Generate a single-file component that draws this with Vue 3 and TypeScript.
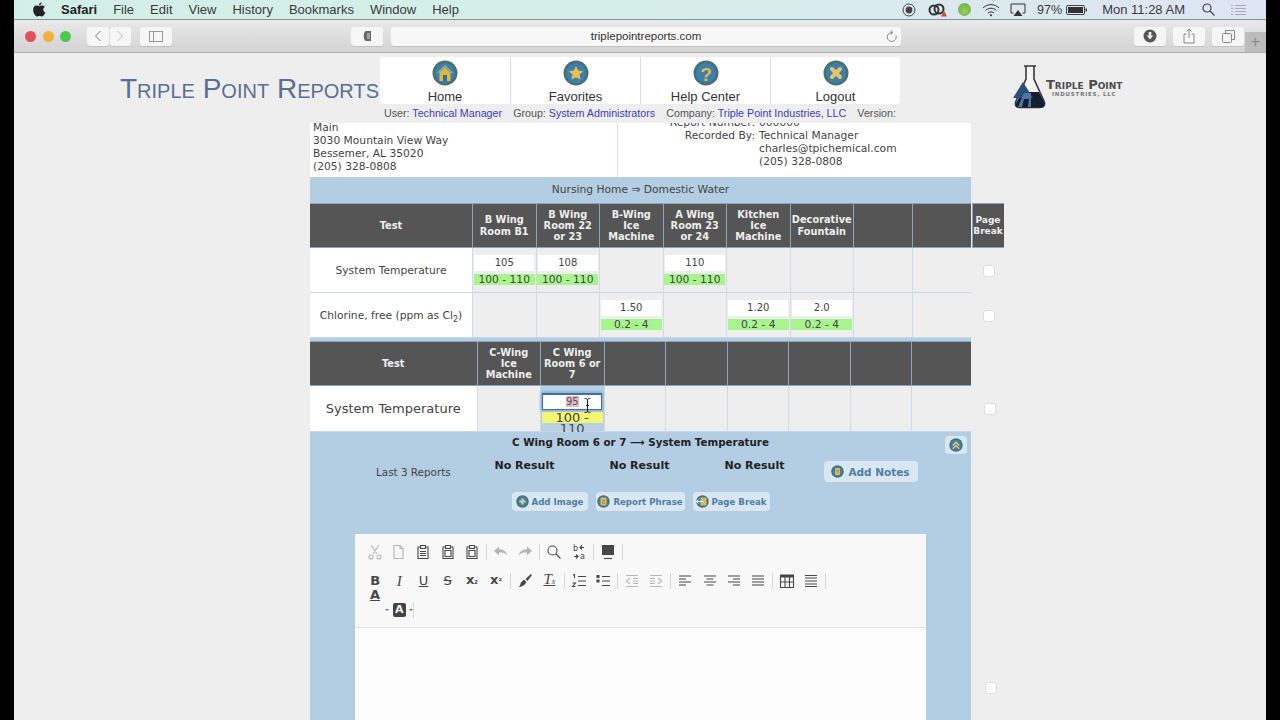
<template>
  <div class="screen">
    <svg class="sprite" width="0" height="0">
      <symbol id="orb" viewBox="0 0 26 26">
        <circle cx="13" cy="13" r="12.5" fill="#47706f" />
        <circle cx="13" cy="13" r="10" fill="#3c80b0" />
      </symbol>
    </svg>

    <div class="window">
      <!-- mac menu bar -->
      <div class="menubar">
        <svg class="apple" width="14" height="16" viewBox="0 0 14 16"><path fill="#222" d="M9.6 0.6c0.1 1.100-0.900 2.800-2.700 2.900-0.200-1.400 1.100-2.800 2.700-2.900zM7 4.300c0.800 0 1.700-0.700 3-0.700 1 0 2.100 0.500 2.800 1.500-2.200 1.300-1.900 4.400 0.500 5.400-0.600 1.600-1.900 4-3.300 4-0.900 0-1.300-0.600-2.500-0.600s-1.700 0.600-2.500 0.600c-1.700 0-3.900-3.700-3.900-6.700 0-2.700 1.700-4.200 3.400-4.200 1.100 0 1.900 0.700 2.500 0.700z" /></svg>
        <span class="menu-item strong">Safari</span>
        <span v-for="m in menus" :key="m" class="menu-item">{{ m }}</span>
        <div class="status">
          <svg class="s-rec" width="14" height="14" viewBox="0 0 14 14"><circle cx="7" cy="7" r="6" fill="none" stroke="#444" /><circle cx="7" cy="7" r="3.400" fill="#444" /></svg>
          <svg class="s-cc" width="20" height="14" viewBox="0 0 20 14"><circle cx="6" cy="7" r="4.500" fill="none" stroke="#333" stroke-width="2" /><circle cx="11" cy="6" r="4.500" fill="none" stroke="#333" stroke-width="2" /><path d="M13 13.500l3-6 3 6z" fill="#c9512f" /></svg>
          <span class="s-dot"></span>
          <svg class="s-wifi" width="18" height="14" viewBox="0 0 18 14" fill="none" stroke="#333"><path d="M1 5c4.500-4.500 11.500-4.500 16 0M3.500 7.500c3-3 8-3 11 0M6 10c1.700-1.500 4.300-1.500 6 0" /><circle cx="9" cy="12.300" r="1" fill="#333" stroke="none" /></svg>
          <svg class="s-air" width="16" height="14" viewBox="0 0 16 14"><path d="M3.500 10H1V1h14v9h-2.500" fill="none" stroke="#333" /><path d="M8 7l4.500 6h-9z" fill="#333" /></svg>
          <span class="s-pct">97%</span>
          <svg class="s-bat" width="21" height="10" viewBox="0 0 21 10"><rect x="0.500" y="0.500" width="18" height="9" rx="1.500" fill="none" stroke="#444" /><rect x="2" y="2" width="15" height="6" fill="#333" /><rect x="19.500" y="3.500" width="1.500" height="3" fill="#444" /></svg>
          <span class="s-time">Mon 11:28 AM</span>
          <svg class="s-search" width="13" height="13" viewBox="0 0 13 13" fill="none" stroke="#444" stroke-width="1.200"><circle cx="5" cy="5" r="4" /><path d="M8 8l4.500 4.500" /></svg>
          <svg class="s-list" width="16" height="12" viewBox="0 0 16 12" stroke="#aab" stroke-width="1"><path d="M5 1.500h11M5 4.500h11M5 7.500h11M5 10.500h11M1 1.500h2M1 4.500h2M1 7.500h2M1 10.500h2" /></svg>
        </div>
      </div>

      <!-- safari toolbar -->
      <div class="toolbar">
        <div class="lights"><i class="red"></i><i class="yellow"></i><i class="green"></i></div>
        <div class="tb-pair">
          <span class="tb-btn nav"><svg width="8" height="12" viewBox="0 0 8 12" fill="none" stroke="#777"><path d="M6.500 1L1.500 6l5 5" /></svg></span>
          <span class="tb-btn nav"><svg width="8" height="12" viewBox="0 0 8 12" fill="none" stroke="#bbb"><path d="M1.500 1l5 5-5 5" /></svg></span>
        </div>
        <span class="tb-btn wide side"><svg width="14" height="11" viewBox="0 0 14 11" fill="none" stroke="#999"><rect x="0.500" y="0.500" width="13" height="10" /><path d="M4.500 0.500v10" /></svg></span>
        <span class="tb-btn wide reader"><svg width="10" height="12" viewBox="0 0 10 12"><path d="M4 1h5v10H4C1 11 1 1 4 1z" fill="#666" /><path d="M5 4h3M5 6h3M5 8h3" stroke="#ddd" /></svg></span>
        <div class="urlbar">
          <span>triplepointreports.com</span>
          <svg class="reload" width="12" height="13" viewBox="0 0 12 13" fill="none" stroke="#888"><path d="M7 2.500a4.500 4.500 0 1 0 4 3" /><path d="M5.500 0.500L8 2.500 5.500 4.500" /></svg>
        </div>
        <div class="tb-right">
          <span class="tb-btn wide"><svg width="14" height="14" viewBox="0 0 14 14"><circle cx="7" cy="7" r="6.500" fill="#555" /><path d="M5.700 3h2.600v3.500h2L7 10.500 3.700 6.500h2z" fill="#eee" /></svg></span>
          <span class="tb-btn wide"><svg width="12" height="16" viewBox="0 0 12 16" fill="none" stroke="#888"><path d="M3.500 6H1v9h10V6H8.500M6 10V1M3.500 3.500L6 1l2.500 2.500" /></svg></span>
          <span class="tb-btn wide"><svg width="13" height="13" viewBox="0 0 13 13" fill="none" stroke="#888"><rect x="0.500" y="3.500" width="9" height="9" rx="1" /><path d="M3.500 3.500v-3h9v9h-3" /></svg></span>
        </div>
        <span class="newtab">+</span>
      </div>

      <!-- page -->
      <div class="page">
        <header class="site-head">
          <div class="brand">Triple Point Reports</div>
          <div class="head-mid">
            <nav class="nav-box">
              <a class="nav-cell">
                <svg class="orb" viewBox="0 0 26 26"><use href="#orb" /><path d="M13 5L5 13h2.500v8h11v-8H21z" fill="#e3b544" /><path d="M13 5L5 13h2.500L13 8l5.500 5H21z" fill="#7fae8a" /><rect x="11" y="15" width="4" height="6" fill="#2f6f9f" /></svg>
                <span>Home</span>
              </a>
              <a class="nav-cell">
                <svg class="orb" viewBox="0 0 26 26"><use href="#orb" /><path d="M13 6l2.200 4.600 5 .6-3.700 3.400 1 5L13 17.200 8.500 19.600l1-5-3.700-3.400 5-.6z" fill="#ecc04a" /></svg>
                <span>Favorites</span>
              </a>
              <a class="nav-cell">
                <svg class="orb" viewBox="0 0 26 26"><use href="#orb" /><text x="13" y="20.500" text-anchor="middle" class="orb-q">?</text></svg>
                <span>Help Center</span>
              </a>
              <a class="nav-cell">
                <svg class="orb" viewBox="0 0 26 26"><use href="#orb" /><path d="M9 9l8 8M17 9l-8 8" stroke="#e8c468" stroke-width="4" stroke-linecap="round" /></svg>
                <span>Logout</span>
              </a>
            </nav>
            <div class="user-line">
              <span>User: <a>Technical Manager</a></span>
              <span>Group: <a>System Administrators</a></span>
              <span>Company: <a>Triple Point Industries, LLC</a></span>
              <span>Version:</span>
            </div>
          </div>
          <div class="corp-logo">
            <svg width="36" height="44" viewBox="0 0 36 44">
              <path d="M12 1h12M14 1v13L4 36c-1.500 4 0 6.500 4 6.500h20c4 0 5.500-2.500 4-6.500L22 14V1" fill="#f4f4f4" stroke="#3a3a3a" stroke-width="1.600" />
              <path d="M10 27h17l5 10c1 3.500-.5 5.500-4 5.500H8c-3.500 0-5-2-3.500-5.500z" fill="#14202f" />
              <path d="M11 17L1 33h20z" fill="#2c4d7a" />
              <path d="M12 28l-6 14h4l2-8h5l-1 8h3V28z" fill="#4b77ab" />
            </svg>
            <div class="corp-text">
              <div class="corp-name">Triple Point</div>
              <div class="corp-sub">INDUSTRIES, LLC</div>
            </div>
          </div>
        </header>

        <div class="scroll">
          <div class="report">
            <section class="info">
              <div class="info-left">
                <div>Main</div>
                <div>3030 Mountain View Way</div>
                <div>Bessemer, AL 35020</div>
                <div>(205) 328-0808</div>
              </div>
              <div class="info-right">
                <span class="lab">Report Number:</span><span>000000</span>
                <span class="lab">Recorded By:</span><span>Technical Manager</span>
                <span></span><span>charles@tpichemical.com</span>
                <span></span><span>(205) 328-0808</span>
              </div>
            </section>

            <div class="section-title">Nursing Home ⇒ Domestic Water</div>

            <div class="row head t1">
              <div v-for="(h, i) in headA" :key="i" class="th">{{ h }}</div>
              <div class="th pb">Page Break</div>
            </div>
            <div v-for="r in rowsA" :key="r.name" class="row t1 body">
              <div class="name">{{ r.name }}<sub v-if="r.sub">{{ r.sub }}</sub><template v-if="r.sub">)</template></div>
              <div v-for="(c, i) in r.cells" :key="i" class="td">
                <template v-if="c">
                  <div class="val">{{ c[0] }}</div>
                  <div class="range">{{ c[1] }}</div>
                </template>
              </div>
              <div class="chk-cell"><span class="chk"></span></div>
            </div>

            <div class="spacer"></div>

            <div class="row head t2">
              <div v-for="(h, i) in headB" :key="i" class="th">{{ h }}</div>
            </div>
            <div class="row t2 body tall">
              <div class="name">System Temperature</div>
              <div class="td"></div>
              <div class="td active">
                <div class="val focus"><mark>95</mark></div>
                <div class="range warn">100 - 110</div>
                <svg class="ibeam" width="7" height="15" viewBox="0 0 7 15" fill="none" stroke="#222"><path d="M0.500 0.500c1.500 0 3 0 3 1.500v11c0 1.500-1.500 1.500-3 1.500M6.500 0.500c-1.500 0-3 0-3 1.500M6.500 14.500c-1.500 0-3 0-3-1.500M2 7.500h3" /></svg>
              </div>
              <div v-for="n in 6" :key="n" class="td"></div>
              <div class="chk-cell"><span class="chk"></span></div>
            </div>

            <div class="panel-wrap">
              <section class="panel">
                <button class="corner">
                  <svg class="mini" viewBox="0 0 26 26"><use href="#orb" /><path d="M7 14l6-6 6 6M7 20l6-6 6 6" fill="none" stroke="#e3c46a" stroke-width="3" /></svg>
                </button>
                <h3 class="panel-title">C Wing Room 6 or 7 ⟶ System Temperature</h3>
                <div class="last">
                  <span class="last-label">Last 3 Reports</span>
                  <b>No Result</b>
                  <b>No Result</b>
                  <b>No Result</b>
                  <button class="pill big">
                    <svg class="mini" viewBox="0 0 26 26"><use href="#orb" /><rect x="8" y="6" width="10" height="14" rx="2" fill="#dcb859" /><path d="M10 11h6M10 14h6" stroke="#8a7431" /></svg>
                    Add Notes
                  </button>
                </div>
                <div class="actions">
                  <button class="pill">
                    <svg class="mini" viewBox="0 0 26 26"><use href="#orb" /><path d="M13 7v12M7 13h12" stroke="#e9cf7c" stroke-width="4" /></svg>
                    Add Image
                  </button>
                  <button class="pill">
                    <svg class="mini" viewBox="0 0 26 26"><use href="#orb" /><rect x="7" y="5" width="12" height="16" rx="2" fill="#dcb859" /><path d="M10 11h6M10 14h6M10 17h6" stroke="#8a7431" /></svg>
                    Report Phrase
                  </button>
                  <button class="pill">
                    <svg class="mini" viewBox="0 0 26 26"><use href="#orb" /><rect x="9" y="5" width="12" height="16" rx="2" fill="#dcb859" /><path d="M1 13h14M5 9l-4 4 4 4" fill="none" stroke="#eef" stroke-width="2" /></svg>
                    Page Break
                  </button>
                </div>

                <div class="editor">
                  <div class="ed-tools">
                    <div v-for="(line, li) in toolLines" :key="li" class="ed-line">
                      <template v-for="(group, gi) in line" :key="gi">
                        <span v-for="(t, ti) in group" :key="ti" class="tool" :class="{ dim: t.dim }">
                          <svg v-if="t.d || t.solid || t.label" width="16" height="16" viewBox="0 0 16 16">
                            <path v-if="t.solid" :d="t.solid" fill="currentColor" />
                            <path v-if="t.d" :d="t.d" fill="none" stroke="currentColor" stroke-width="1.100" />
                            <text v-if="t.label" :x="t.lx" :y="t.ly" class="tool-small">{{ t.label }}</text>
                            <text v-if="t.label2" x="9" y="14.500" class="tool-small">{{ t.label2 }}</text>
                          </svg>
                          <span v-else class="tool-text" :class="t.cls">{{ t.text }}<small v-if="t.small">{{ t.small }}</small></span>
                          <i v-if="t.caret" class="caret"></i>
                        </span>
                        <i class="sep"></i>
                      </template>
                    </div>
                  </div>
                </div>
              </section>
              <div class="panel-side"><span class="chk"></span></div>
            </div>
          </div>
        </div>
      </div>
    </div>
  </div>
</template>

<script setup lang="ts">
interface Row {
  name: string
  sub?: string
  cells: (string[] | null)[]
}

interface Tool {
  d?: string
  solid?: string
  dim?: boolean
  text?: string
  small?: string
  cls?: string
  caret?: boolean
  label?: string
  label2?: string
  lx?: number
  ly?: number
}

const menus = ['File', 'Edit', 'View', 'History', 'Bookmarks', 'Window', 'Help']

const headA = [
  'Test',
  'B Wing Room B1',
  'B Wing Room 22 or 23',
  'B-Wing Ice Machine',
  'A Wing Room 23 or 24',
  'Kitchen Ice Machine',
  'Decorative Fountain',
  '',
  ''
]

const headB = ['Test', 'C-Wing Ice Machine', 'C Wing Room 6 or 7', '', '', '', '', '', '']

const temp = '100 - 110'
const chlor = '0.2 - 4'

const rowsA: Row[] = [
  {
    name: 'System Temperature',
    cells: [['105', temp], ['108', temp], null, ['110', temp], null, null, null, null]
  },
  {
    name: 'Chlorine, free (ppm as Cl',
    sub: '2',
    cells: [null, null, ['1.50', chlor], null, ['1.20', chlor], ['2.0', chlor], null, null]
  }
]

const clip = 'M5 3H3v11.500h10V3h-2M5.500 1.500h5v3h-5z'

const toolLines: Tool[][][] = [
  [
    [
      { dim: true, d: 'M4 1l6 9M12 1l-6 9M2 13a2 2 0 1 0 4 0a2 2 0 1 0-4 0M10 13a2 2 0 1 0 4 0a2 2 0 1 0-4 0' },
      { dim: true, d: 'M3 1.500h6l3 3v10H3zM9 1.500v3h3' },
      { d: clip + 'M5 7.500h6M5 9.500h6M5 11.500h6' },
      { d: clip + 'M5 6.500h6v6H5z', label: '', },
      { d: clip + 'M5 6.500h6v6H5z' }
    ],
    [
      { dim: true, solid: 'M1 7l5-4.500v2.800c4 0 7.500 2 8.500 6.200-2-2.500-4.500-3-8.500-3v3z' },
      { dim: true, solid: 'M15 7l-5-4.500v2.800c-4 0-7.500 2-8.500 6.200 2-2.500 4.500-3 8.500-3v3z' }
    ],
    [
      { d: 'M2 6.500a4.500 4.500 0 1 0 9 0a4.500 4.500 0 1 0-9 0M10 10l4.500 4.500M10.500 10.500l4 4' },
      { d: 'M9 3.500h4M11 1.500l-2 2 2 2M3 12.500h4M5 10.500l2 2-2 2', label: 'b', lx: 2, ly: 7, label2: 'a' }
    ],
    [
      { solid: 'M2 1h12v10H2z', d: 'M4 14.500h8' }
    ]
  ],
  [
    [
      { text: 'B', cls: 'bold' },
      { text: 'I', cls: 'ital' },
      { text: 'U', cls: 'under' },
      { text: 'S', cls: 'strike' },
      { text: 'x', small: '₂', cls: 'bold' },
      { text: 'x', small: '²', cls: 'bold' }
    ],
    [
      { solid: 'M14 1l1 1-4.500 6-2-2zM7 6.500l2.500 2.500-1 1.500c-1 1.500-3.500 3.500-7 3.500 2-1 1.500-3 2.500-4.500z' },
      { text: 'T', small: 'x', cls: 'ital under' }
    ],
    [
      { d: 'M7 3.500h8M7 8h8M7 12.500h8M2 2l1.500-.5V5M1.500 10h3l-3 3.500h3' },
      { solid: 'M1.500 2h3v3h-3zM1.500 6.500h3v3h-3z', d: 'M7 3.500h8M7 8h8M7 12.500h8' }
    ],
    [
      { dim: true, d: 'M2 2.500h12M9 5.500h5M9 8h5M9 10.500h5M2 13.500h12M6 5L2.500 8 6 11' },
      { dim: true, d: 'M2 2.500h12M2 5.500h5M2 8h5M2 10.500h5M2 13.500h12M10 5l3.500 3L10 11' }
    ],
    [
      { d: 'M2 3h12M2 6h7M2 9h12M2 12h7' },
      { d: 'M2 3h12M4.500 6h7M2 9h12M4.500 12h7' },
      { d: 'M2 3h12M7 6h7M2 9h12M7 12h7' },
      { d: 'M2 3h12M2 6h12M2 9h12M2 12h12' }
    ],
    [
      { solid: 'M1 1.500h14v3H1z', d: 'M1.500 2v12.500h13V2M1.500 9h13M6 4v10.500M10.500 4v10.500' },
      { d: 'M2 2.500h12M2 5h12M2 8h12M2 11h12M2 13.500h12' }
    ]
  ],
  [
    [
      { text: 'A', cls: 'bold under tall', caret: true },
      { text: 'A', cls: 'bold inverse', caret: true }
    ]
  ]
]
</script>

<style>
html,
body {
  margin: 0;
  background: #000;
}
</style>

<style scoped>
.screen {
  width: 1280px;
  height: 720px;
  overflow: hidden;
  background: #000;
  padding: 0 14px;
  box-sizing: border-box;
  font-family: "Liberation Sans", Arial, sans-serif;
}
.sprite {
  position: absolute;
}
.window {
  height: 720px;
  display: flex;
  flex-direction: column;
  background: #eee;
}

/* menu bar */
.menubar {
  height: 19px;
  flex: none;
  display: flex;
  align-items: center;
  padding-left: 18px;
  background: linear-gradient(90deg, #d2efe7 0%, #d6eee9 50%, #dfe4f4 100%);
  font-size: 13px;
  color: #3a3a3a;
  border-bottom: 1px solid #7c9a94;
}
.apple {
  margin-right: 15px;
}
.menu-item {
  margin-right: 16px;
}
.menu-item.strong {
  font-weight: 700;
  color: #222;
}
.status {
  margin-left: auto;
  display: flex;
  align-items: center;
  padding-right: 20px;
  position: relative;
}
.s-rec { margin-right: 12px; }
.s-cc { margin-right: 10px; }
.s-dot {
  width: 13px;
  height: 13px;
  border-radius: 50%;
  background: radial-gradient(circle at 50% 60%, #9ad15c, #5aa83a);
  margin-right: 11px;
}
.s-wifi { margin-right: 10px; }
.s-air { margin-right: 11px; }
.s-pct { font-size: 12.500px; margin-right: 4px; }
.s-bat { margin-right: 15px; }
.s-time { margin-right: 17px; }
.s-search { margin-right: 15px; }

/* toolbar */
.toolbar {
  height: 32px;
  flex: none;
  display: flex;
  align-items: center;
  position: relative;
  background: linear-gradient(#e9e9e9, #d3d3d3);
  border-bottom: 1px solid #adadad;
}
.lights {
  display: flex;
  gap: 6.500px;
  margin-left: 11px;
  margin-right: 16px;
}
.lights i {
  width: 11px;
  height: 11px;
  border-radius: 50%;
}
.red { background: #e4505a; }
.yellow { background: #f2b13a; }
.green { background: #4ec74f; }
.tb-pair {
  display: flex;
  gap: 1px;
  margin-right: 9px;
}
.tb-btn {
  height: 19px;
  display: flex;
  align-items: center;
  justify-content: center;
  background: #f6f6f6;
  border-radius: 3px;
  box-shadow: 0 1px 0 #c2c2c2;
}
.nav { width: 21.500px; }
.wide { width: 32px; }
.side { margin-right: 179px; }
.reader { margin-right: 8px; }
.urlbar {
  width: 510px;
  height: 19px;
  flex: none;
  background: #f7f7f7;
  border-radius: 3px;
  box-shadow: 0 1px 0 #c2c2c2;
  display: flex;
  align-items: center;
  justify-content: center;
  position: relative;
  font-size: 11.500px;
  color: #333;
}
.reload {
  position: absolute;
  right: 4px;
  top: 3px;
}
.tb-right {
  display: flex;
  gap: 7px;
  margin-left: 233px;
}
.newtab {
  position: absolute;
  right: 0;
  bottom: 0;
  width: 21px;
  height: 20px;
  background: #bcbcbc;
  color: #8a8a8a;
  font-size: 16px;
  line-height: 20px;
  text-align: center;
}

/* page head */
.page {
  flex: 1;
  min-height: 0;
  display: flex;
  flex-direction: column;
}
.site-head {
  height: 70px;
  flex: none;
  display: grid;
  grid-template-columns: 366px 520px 1fr;
  color: #444;
}
.brand {
  padding: 21px 0 0 106px;
  font-family: "Liberation Sans Narrow", "Liberation Sans", sans-serif;
  font-variant: small-caps;
  font-size: 28px;
  line-height: 30px;
  white-space: nowrap;
  color: #5a6f92;
}
.head-mid {
  padding-top: 4px;
}
.nav-box {
  height: 47px;
  display: grid;
  grid-template-columns: repeat(4, 1fr);
  background: #fff;
  border-radius: 3px;
}
.nav-cell {
  display: flex;
  flex-direction: column;
  align-items: center;
  font-size: 13px;
  line-height: 15px;
  color: #333;
  border-left: 1px solid #ddd;
}
.nav-cell:first-child {
  border-left: 0;
}
.orb {
  width: 26px;
  height: 26px;
  margin: 3px 0 3px;
}
.orb-q {
  font: 700 19px "Liberation Sans", sans-serif;
  fill: #e6b940;
}
.user-line {
  display: flex;
  justify-content: space-between;
  padding: 0 4px;
  font-size: 10.700px;
  line-height: 19px;
  color: #555;
  white-space: nowrap;
}
.user-line a {
  color: #3b3bc4;
}
.corp-logo {
  display: flex;
  align-items: flex-start;
  padding: 12px 0 0 112px;
}
.corp-text {
  margin: 13px 0 0 -2px;
  text-align: center;
}
.corp-name {
  font: 700 13px/13px "DejaVu Sans", sans-serif;
  font-variant: small-caps;
  color: #4c4c4c;
  white-space: nowrap;
}
.corp-sub {
  font: 700 5.500px/7px "DejaVu Sans", sans-serif;
  letter-spacing: 0.800px;
  color: #777;
}

/* report */
.scroll {
  flex: 1;
  min-height: 0;
  overflow: hidden;
  padding-left: 296px;
}
.report {
  width: 694px;
  font-family: "DejaVu Sans", Verdana, sans-serif;
  font-size: 10.700px;
  color: #444;
}
.info {
  width: 661px;
  height: 54px;
  display: grid;
  grid-template-columns: 308px 1fr;
  background: #fff;
  overflow: hidden;
  line-height: 13px;
}
.info-left {
  padding: -2px 0 0 3px;
  padding-left: 3px;
  margin-top: -2px;
  border-right: 1px solid #d5deea;
  height: 58px;
}
.info-right {
  display: grid;
  grid-template-columns: 137px 1fr;
  column-gap: 4px;
  align-content: start;
  margin-top: -7px;
  padding-left: 0;
}
.lab {
  text-align: right;
}
.section-title {
  width: 661px;
  height: 26px;
  line-height: 25px;
  text-align: center;
  background: #b3cde3;
}
.row {
  display: grid;
}
.t1 {
  grid-template-columns: 162px 63.500px 63.500px 63.500px 63.500px 63.500px 63.500px 59px 58.500px 33px;
}
.t2 {
  grid-template-columns: 166.500px 63.500px 63.500px 61.500px 61.500px 61.500px 61.500px 61px 60.500px 33px;
}
.head {
  height: 45px;
}
.th {
  background: #555;
  color: #eee;
  font-weight: 700;
  font-size: 9.800px;
  line-height: 11.300px;
  display: flex;
  align-items: center;
  justify-content: center;
  text-align: center;
  border-left: 1px solid #8ea4ba;
  border-top: 1px solid #8ea4ba;
  border-bottom: 1px solid #8ea4ba;
  box-sizing: border-box;
  padding: 0 2px;
}
.th:first-child {
  border-left: 0;
}
.th.pb {
  margin-left: 1px;
  font-size: 9px;
  line-height: 10.500px;
}
.body {
  height: 45px;
}
.tall {
  height: 46px;
}
.name {
  background: #fff;
  display: flex;
  align-items: center;
  justify-content: center;
  border-bottom: 1px solid #c9d7e6;
  white-space: pre;
}
.name sub {
  font-size: 8px;
  line-height: 1;
  align-self: flex-end;
  margin-bottom: 13px;
}
.td {
  position: relative;
  background: #eee;
  border-left: 1px solid #cfdae8;
  border-bottom: 1px solid #c9d7e6;
  box-sizing: border-box;
  display: flex;
  flex-direction: column;
  justify-content: center;
  align-items: center;
  padding-bottom: 1px;
}
.val {
  width: 60px;
  height: 16px;
  line-height: 16px;
  background: #fff;
  text-align: center;
  font-size: 10px;
  margin-bottom: 3px;
}
.range {
  width: 61px;
  height: 11px;
  line-height: 11px;
  background: #a8f58f;
  text-align: center;
}
.active {
  background: #b8d0e6;
}
.focus {
  width: 58px;
  height: 14px;
  line-height: 14px;
  border: 1px solid #3f6fa5;
  border-top-width: 2px;
  box-shadow: 0 0 3px 1px #7da6d6;
  margin-bottom: 2px;
  padding-right: 0;
}
.focus mark {
  background: #e3bccb;
  color: #555;
}
.warn {
  background: #f4f570;
}
.ibeam {
  position: absolute;
  left: 43px;
  top: 12px;
}
.chk-cell {
  display: flex;
  align-items: center;
  justify-content: center;
  padding-left: 4px;
}
.chk {
  display: block;
  width: 10px;
  height: 10px;
  background: #fff;
  border: 1px solid #dcdcdc;
  border-radius: 3px;
}
.spacer {
  width: 661px;
  height: 3px;
  background: #b3cde3;
}

/* notes panel */
.panel-wrap {
  display: flex;
}
.panel {
  position: relative;
  width: 661px;
  height: 289px;
  flex: none;
  background: #b3cde3;
}
.panel-side {
  padding: 250px 0 0 14px;
}
.corner {
  position: absolute;
  right: 4px;
  top: 4px;
  width: 22px;
  height: 18px;
  padding: 0;
  border: 0;
  border-radius: 4px;
  background: #d9e7f3;
  display: flex;
  align-items: center;
  justify-content: center;
}
.panel-title {
  margin: 0;
  height: 20px;
  line-height: 20px;
  font-size: 10.300px;
  font-weight: 700;
  text-align: center;
  color: #222;
}
.last {
  height: 40px;
  display: grid;
  grid-template-columns: 157px 115px 115px 115px 1fr;
  color: #222;
}
.last b {
  font-size: 11px;
  line-height: 28px;
  text-align: center;
}
.last-label {
  padding: 13px 0 0 66px;
  font-size: 10.400px;
  line-height: 14px;
  color: #444;
  white-space: nowrap;
}
.pill {
  display: flex;
  align-items: center;
  justify-content: center;
  gap: 3px;
  height: 19px;
  padding: 0 8px;
  border: 0;
  border-radius: 4px;
  background: #d9e7f3;
  font: 700 8.600px "DejaVu Sans", Verdana, sans-serif;
  color: #4f7da8;
  white-space: nowrap;
}
.pill .mini {
  width: 13px;
  height: 13px;
}
.big {
  width: 94px;
  height: 21px;
  padding: 0;
  margin: 9px 0 0 11.500px;
  font-size: 10.500px;
  gap: 4px;
}
.mini {
  width: 14px;
  height: 14px;
}
.actions {
  display: flex;
  justify-content: center;
  gap: 8px;
}
.actions .pill:nth-child(1) { width: 76px; padding: 0; }
.actions .pill:nth-child(2) { width: 89px; padding: 0; }
.actions .pill:nth-child(3) { width: 77px; padding: 0; }

/* editor */
.editor {
  margin: 23px 0 0 45px;
  width: 571px;
  height: 300px;
  background: #fcfcfc;
}
.ed-tools {
  height: 94px;
  box-sizing: border-box;
  padding: 3px 0 0 8px;
  background: #f8f8f8;
  border-bottom: 1px solid #e4e4e4;
}
.ed-line {
  display: flex;
  align-items: center;
  height: 29px;
}
.tool {
  position: relative;
  width: 24.200px;
  height: 16px;
  display: flex;
  align-items: center;
  justify-content: center;
  color: #474747;
}
.tool.dim {
  color: #b5b5b5;
}
.tool-small {
  font: 8px "DejaVu Sans", sans-serif;
  fill: #444;
}
.tool-text {
  font: 13px/16px "DejaVu Sans", sans-serif;
  white-space: nowrap;
}
.tool-text small {
  font-size: 8px;
}
.bold { font-weight: 700; }
.ital { font-style: italic; font-family: "Liberation Serif", serif; font-size: 15px; }
.under { text-decoration: underline; }
.strike { text-decoration: line-through; }
.tall { font-size: 13px; }
.inverse {
  background: #444;
  color: #f4f4f4;
  border-radius: 2px;
  padding: 0 2px;
  font-size: 11px;
  line-height: 14px;
  display: inline-block;
}
.caret {
  position: absolute;
  right: -2px;
  top: 7px;
  border: 2.500px solid transparent;
  border-top-color: #777;
  border-bottom: 0;
}
.sep {
  width: 1px;
  height: 16px;
  margin: 0 2px;
  background: #d8d8d8;
}
</style>
